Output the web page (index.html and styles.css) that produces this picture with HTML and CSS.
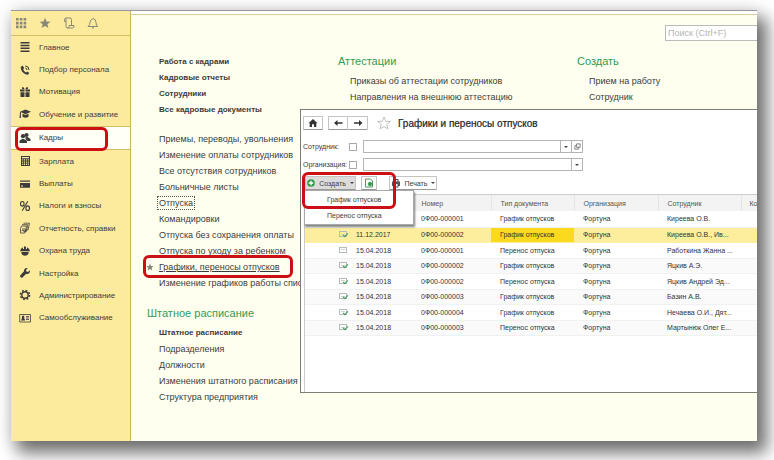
FILE: index.html
```html
<!DOCTYPE html>
<html lang="ru">
<head>
<meta charset="utf-8">
<title>Кадры</title>
<link rel="stylesheet" href="styles.css">
</head>
<body>
<div class="app">
  <nav class="sidebar">
    <div class="tools">
      <button aria-label="Меню"><svg viewBox="0 0 12 12"><path fill="#8b8877" d="M1 1h2.6v2.6H1zM4.8 1h2.6v2.6H4.8zM8.6 1h2.6v2.6H8.6zM1 4.8h2.6v2.6H1zM4.8 4.8h2.6v2.6H4.8zM8.6 4.8h2.6v2.6H8.6zM1 8.6h2.6v2.6H1zM4.8 8.6h2.6v2.6H4.8zM8.6 8.6h2.6v2.6H8.6z"/></svg></button>
      <button aria-label="Избранное"><svg viewBox="0 0 12 12"><path fill="#8b8877" d="M6 .8l1.500 3.700 4 .2-3.100 2.500 1 3.900L6 9l-3.400 2.100 1-3.900L.5 4.700l4-.2z"/></svg></button>
      <button aria-label="История"><svg viewBox="0 0 12 12" fill="none" stroke="#8b8877"><path d="M3 4.500H1.500V2.500Q1.500 1 3 1H7Q8.500 1 8.500 2.500V8M3 1.500V9.500Q3 11 4.500 11H9.500Q11 11 11 9V8.500H6V9.500Q6 11 4.500 11"/></svg></button>
      <button aria-label="Оповещения"><svg viewBox="0 0 12 12" fill="none" stroke="#8b8877"><path d="M1 9.500Q3 8 3 5.500T6 1.500Q9 2 9 5.500T11 9.500ZM5 10.500Q6 12 7 10.500"/></svg></button>
    </div>
    <ul class="menu">
      <li><a href="#"><svg viewBox="0 0 12 12"><path d="M1.500 1h9v1.500h-9zM1.500 3.800h9v1.500h-9zM1.500 6.600h9v1.500h-9zM1.500 9.400h9v1.500h-9z"/></svg>Главное</a></li>
      <li><a href="#"><svg viewBox="0 0 12 12"><path d="M3.500 1.500L1.800 3C1.500 7 5 10.500 9 10.800l1.300-1.700-2-1.700-1.300 1C5.500 7.600 4.500 6.300 4.200 5.200l1-1.200z"/><path fill="none" stroke="currentColor" d="M6.300 4Q8 4 8 6M6.300 2Q10 2 10 6"/></svg>Подбор персонала</a></li>
      <li><a href="#"><svg viewBox="0 0 12 12"><path d="M1 3.500h4.500v2H1zM6.500 3.500H11v2H6.500zM1.500 6.200h4V11h-4zM6.500 6.200h4V11h-4zM5.600 3.200L3 3 3 1.200 4.600 1.200zM6.400 3.200L9 3 9 1.200 7.400 1.200z"/></svg>Мотивация</a></li>
      <li><a href="#"><svg viewBox="0 0 12 12"><path d="M6.500 1.500L12 3.800 6.500 6.200 1 3.800zM3.500 5.700l3 1.300 3-1.300v3Q6.500 11 3.500 8.700zM1 4h.9v6H.5z"/></svg>Обучение и развитие</a></li>
      <li class="active"><a href="#"><svg viewBox="0 0 12 12"><circle cx="7.500" cy="3" r="2.100"/><path d="M6.600 5h2L11.500 7v2h-3L6.500 7z"/><circle cx="4" cy="4.200" r="2.100"/><path d="M.5 11V8.800L3 7h2l3 1.800V11z"/></svg>Кадры</a></li>
      <li><a href="#"><svg viewBox="0 0 12 12"><path fill-rule="evenodd" d="M2 1h9v10H2zM3 2v1.200h7V2zM3.200 4.200v1.300h1V4.200zM5 4.200v1.300h1V4.200zM6.900 4.200v1.300h1V4.200zM8.800 4.200v1.300h1V4.200zM3.200 6.400v1.300h1V6.400zM5 6.400v1.300h1V6.400zM6.900 6.400v1.300h1V6.400zM8.800 6.400v1.300h1V6.400zM3.200 8.600v1.300h1V8.600zM5 8.600v1.300h1V8.600zM6.900 8.600v1.300h1V8.600zM8.800 8.600v1.300h1V8.600z"/></svg>Зарплата</a></li>
      <li><a href="#"><svg viewBox="0 0 12 12"><path fill-rule="evenodd" d="M1 2.500h10v1.300H1zM1 5h10v4.700H1zM2 7.500v1h2v-1z"/></svg>Выплаты</a></li>
      <li><a href="#"><svg viewBox="0 0 12 12" fill="none" stroke="currentColor" stroke-width="1.100"><ellipse cx="3.300" cy="3.800" rx="1.800" ry="2.300"/><ellipse cx="8.700" cy="8.200" rx="1.800" ry="2.300"/><path d="M8.800 1.200L3.200 10.800"/></svg>Налоги и взносы</a></li>
      <li><a href="#"><svg viewBox="0 0 12 12" fill="none" stroke="currentColor" stroke-width=".8"><path d="M4.500 1.200H10.500L9 8H6M3 2.700H8.800L7.300 9.500H4.500M2.500 4H7.500L6 11H1.500V6.500zM3 7h3M2.800 8.500h3"/></svg>Отчетность, справки</a></li>
      <li><a href="#"><svg viewBox="0 0 12 12"><path d="M1 6.200Q1.500 3 4 2.200V4h1V1.500h2V4h1V2.200Q10.500 3 11 6.200zM2.300 7h7.400Q9.500 10.800 6 10.800T2.300 7z"/></svg>Охрана труда</a></li>
      <li><a href="#"><svg viewBox="0 0 12 12"><path d="M10.800 3.200L9 5 7.400 4.600 7 3 8.700 1.300C6.500.6 4.800 2 5 4.300L1.200 8.600Q.7 10.900 3.200 10.800L7 7C9.500 7.500 11.500 5.500 10.800 3.200z"/></svg>Настройка</a></li>
      <li><a href="#"><svg viewBox="0 0 12 12" fill="none" stroke="currentColor"><circle cx="6" cy="6" r="3.200" stroke-width="1.400"/><circle cx="6" cy="6" r="4.600" stroke-width="1.500" stroke-dasharray="1.800 1.810"/></svg>Администрирование</a></li>
      <li><a href="#"><svg viewBox="0 0 12 12" fill="none" stroke="currentColor" stroke-width=".8"><path d="M.7 2.500h10.800v7.500H.7zM7 4.500h3M7 6h3M7 7.500h3"/><path fill="currentColor" stroke="none" d="M3 3.700h2.200v2.200l1 2.600H2l1-2.600z"/></svg>Самообслуживание</a></li>
    </ul>
  </nav>

  <main class="page">
    <input class="search" type="search" placeholder="Поиск (Ctrl+F)" aria-label="Поиск">
    <div class="columns">
      <section class="col-main">
        <ul class="links strong">
          <li><a href="#">Работа с кадрами</a></li>
          <li><a href="#">Кадровые отчеты</a></li>
          <li><a href="#">Сотрудники</a></li>
          <li><a href="#">Все кадровые документы</a></li>
        </ul>
        <ul class="links">
          <li><a href="#">Приемы, переводы, увольнения</a></li>
          <li><a href="#">Изменение оплаты сотрудников</a></li>
          <li><a href="#">Все отсутствия сотрудников</a></li>
          <li><a href="#">Больничные листы</a></li>
          <li><a class="focused" href="#">Отпуска</a></li>
          <li><a href="#">Командировки</a></li>
          <li><a href="#">Отпуска без сохранения оплаты</a></li>
          <li><a href="#">Отпуска по уходу за ребенком</a></li>
          <li class="starred"><svg viewBox="0 0 12 12"><path fill="#858378" d="M6 .8l1.500 3.700 4 .2-3.100 2.500 1 3.900L6 9l-3.400 2.100 1-3.900L.5 4.700l4-.2z"/></svg><a href="#">Графики, переносы отпусков</a></li>
          <li><a href="#">Изменение графиков работы списком</a></li>
        </ul>
        <h2>Штатное расписание</h2>
        <ul class="links">
          <li class="strong"><a href="#">Штатное расписание</a></li>
          <li><a href="#">Подразделения</a></li>
          <li><a href="#">Должности</a></li>
          <li><a href="#">Изменения штатного расписания</a></li>
          <li><a href="#">Структура предприятия</a></li>
        </ul>
      </section>
      <section class="col-att">
        <h2>Аттестации</h2>
        <ul class="links">
          <li><a href="#">Приказы об аттестации сотрудников</a></li>
          <li><a href="#">Направления на внешнюю аттестацию</a></li>
        </ul>
      </section>
      <section class="col-new">
        <h2>Создать</h2>
        <ul class="links">
          <li><a href="#">Прием на работу</a></li>
          <li><a href="#">Сотрудник</a></li>
        </ul>
      </section>
    </div>
  </main>

  <section class="window">
    <header class="titlebar">
      <button class="btn home" aria-label="Домой"><svg viewBox="0 0 10 10"><path d="M5 1l4.500 4.200H8.300V9H6V6.300H4V9H1.700V5.200H.5z"/></svg></button>
      <div class="pair">
        <button class="btn" aria-label="Назад"><svg viewBox="0 0 10 10"><path d="M1 5l3.500-3v2.300H9.500v1.400h-5V8z"/></svg></button>
        <button class="btn" aria-label="Вперед"><svg viewBox="0 0 10 10"><path d="M9.500 5L6 2v2.300H1v1.400h5V8z"/></svg></button>
      </div>
      <svg class="fav" viewBox="0 0 12 12"><path fill="none" stroke="#bbb" stroke-width=".8" d="M6 .8l1.500 3.700 4 .2-3.100 2.500 1 3.900L6 9l-3.400 2.100 1-3.900L.5 4.700l4-.2z"/></svg>
      <h1>Графики и переносы отпусков</h1>
    </header>
    <div class="filters">
      <label for="emp">Сотрудник:</label>
      <input type="checkbox" aria-label="Отбор по сотруднику">
      <div class="combo"><input id="emp" type="text"><button aria-label="Выбрать"><i class="caret"></i></button><button aria-label="Открыть"><svg viewBox="0 0 8 8" fill="none" stroke="#666" stroke-width=".9"><path d="M3 1h4v4H3zM3 3H1v4h4V5"/></svg></button></div>
      <label for="org">Организация:</label>
      <input type="checkbox" aria-label="Отбор по организации">
      <div class="combo"><input id="org" type="text"><button aria-label="Выбрать"><i class="caret"></i></button></div>
    </div>
    <div class="toolbar">
      <button class="btn create"><svg viewBox="0 0 10 10"><circle cx="5" cy="5" r="4.800" fill="#2f9e49"/><path stroke="#fff" stroke-width="1.600" d="M5 2.200v5.600M2.200 5h5.600"/></svg>Создать<i class="caret"></i></button>
      <button class="btn copy" aria-label="Скопировать"><svg viewBox="0 0 10 10" fill="none" stroke="#4a9a5c"><path d="M1.500 1h5l2 2v6h-7z"/><circle cx="6" cy="6" r="1.800" fill="#2f9e49"/></svg></button>
      <button class="btn print"><svg viewBox="0 0 10 10"><path fill="#555" d="M2.500 1h5v2.500H9V8H7.500v1.500h-5V8H1V3.500h1.500z"/><path fill="#fff" d="M3.500 6h3v2.500h-3zM3.500 2h3v1.500h-3z"/></svg>Печать<i class="caret"></i></button>
      <div class="dropdown">
        <button>График отпусков</button>
        <button>Перенос отпуска</button>
      </div>
    </div>
    <div class="grid">
      <table>
        <colgroup><col class="c-date"><col class="c-num"><col class="c-type"><col class="c-org"><col class="c-emp"><col></colgroup>
        <thead><tr><th></th><th>Номер</th><th>Тип документа</th><th>Организация</th><th>Сотрудник</th><th>Ко</th></tr></thead>
        <tbody>
          <tr><td></td><td>0Ф00-000001</td><td>График отпусков</td><td>Фортуна</td><td>Киреева О.В.</td><td></td></tr>
          <tr class="selected"><td><span class="doc ok"></span>11.12.2017</td><td>0Ф00-000002</td><td class="current">График отпусков</td><td>Фортуна</td><td>Киреева О.В., Ив...</td><td></td></tr>
          <tr><td><span class="doc"></span>15.04.2018</td><td>0Ф00-000001</td><td>Перенос отпуска</td><td>Фортуна</td><td>Работкина Жанна ...</td><td></td></tr>
          <tr><td><span class="doc ok"></span>15.04.2018</td><td>0Ф00-000002</td><td>График отпусков</td><td>Фортуна</td><td>Яцкив А.Э.</td><td></td></tr>
          <tr><td><span class="doc ok"></span>15.04.2018</td><td>0Ф00-000002</td><td>Перенос отпуска</td><td>Фортуна</td><td>Яцкив Андрей Эд...</td><td></td></tr>
          <tr><td><span class="doc ok"></span>15.04.2018</td><td>0Ф00-000003</td><td>График отпусков</td><td>Фортуна</td><td>Базин А.В.</td><td></td></tr>
          <tr><td><span class="doc ok"></span>15.04.2018</td><td>0Ф00-000004</td><td>График отпусков</td><td>Фортуна</td><td>Нечаева О.И., Дят...</td><td></td></tr>
          <tr><td><span class="doc ok"></span>15.04.2018</td><td>0Ф00-000003</td><td>Перенос отпуска</td><td>Фортуна</td><td>Мартынюк Олег Е...</td><td></td></tr>
        </tbody>
      </table>
    </div>
  </section>
</div>
</body>
</html>
```
FILE: styles.css
```css
*, *::before, *::after { box-sizing: border-box; }
body {
  margin: 0;
  min-height: 100vh;
  padding: 10px 17px 19px 11px;
  display: flex;
  overflow: hidden;
  background: #fff;
  font-family: "Liberation Sans", Arial, sans-serif;
  font-size: 9px;
  color: #3c3c3c;
}
button, input { font: inherit; color: inherit; margin: 0; padding: 0; }
button { border: 0; background: none; }
a { color: inherit; text-decoration: none; }
ul { list-style: none; margin: 0; padding: 0; }
h1, h2 { margin: 0; font-weight: normal; }
svg { flex: none; }

.app {
  position: relative;
  flex: 1;
  display: flex;
  background: #fffff0;
  border-top: 1px solid #999;
  box-shadow: 8px 10px 16px 2px rgba(0, 0, 0, .55), 0 0 16px rgba(0, 0, 0, .12);
}

/* sidebar */
.sidebar {
  flex: none;
  width: 120px;
  background: #fceb9c;
  border-right: 1px solid #c9b65c;
  font-size: 8px;
}
.tools {
  display: flex;
  align-items: center;
  gap: 12px;
  height: 25px;
  padding-left: 4px;
  border-bottom: 1px solid #d3bf66;
}
.tools button { display: flex; }
.tools svg { width: 12px; height: 12px; }
.menu { display: flex; flex-direction: column; height: 293px; }
.menu li { flex: 1; display: flex; align-items: center; position: relative; }
.menu a { display: flex; align-items: center; gap: 8px; padding-left: 8px; white-space: nowrap; }
.menu svg { width: 12px; height: 12px; fill: #3c3c3c; color: #3c3c3c; }
.menu svg[fill="none"] { fill: none; }
.menu .active { background: #fffff6; border: 1px solid #d3bf66; border-width: 1px 0; }
.menu .active::after, .starred::before, .create::after {
  content: "";
  position: absolute;
  border: 3px solid #cc0f14;
  border-radius: 6px;
  pointer-events: none;
}
.menu .active::after { left: 4px; top: 0; width: 93px; height: 24px; }

/* section page */
.page { flex: 1; min-width: 0; border-top: 3px solid #fff; box-shadow: inset 0 1px #d8cc9a; overflow: hidden; }
.search {
  display: block;
  width: 92px;
  height: 16px;
  margin: 11px 0 0 auto;
  padding: 0 2px;
  border: 1px solid #bbb;
  border-right: 0;
  background: #fff;
  outline: 0;
}
.search::placeholder { color: #b5b5b5; }
.columns { display: grid; grid-template-columns: 191px 239px 1fr; padding: 12px 0 0 16px; }
.links { padding-left: 12px; }
.links li { position: relative; height: 16px; line-height: 16px; white-space: nowrap; }
.strong { font-weight: bold; font-size: 8px; }
.col-main .links:first-child { margin: 1px 0 13px; }
h2 { font-size: 11px; line-height: 16px; color: #2f9b52; }
.col-main h2 { margin: 14px 0 4px; }
.col-att h2, .col-new h2 { margin-bottom: 4px; }
.focused { outline: 1px dotted #555; outline-offset: 1px; }
.starred a { text-decoration: underline; }
.starred svg { position: absolute; left: -13px; top: 4px; width: 8px; height: 8px; }
.starred::before { left: -16px; top: -4px; width: 150px; height: 23px; }

/* document window */
.window {
  position: absolute;
  left: 289px;
  right: 0;
  top: 98px;
  height: 284px;
  display: flex;
  flex-direction: column;
  padding-left: 2px;
  background: #fff;
  border: 1px solid #7d7d78;
  border-right: 0;
  font-size: 7px;
}
.titlebar { display: flex; align-items: center; height: 26px; }
.btn {
  display: flex;
  align-items: center;
  justify-content: center;
  height: 14px;
  background: #fff;
  border: 1px solid #c4c4c4;
  border-bottom-color: #999;
  border-radius: 1px;
}
.btn svg { width: 10px; height: 10px; fill: #333; }
.btn svg[fill="none"] { fill: none; }
.titlebar .btn { width: 20px; }
.pair { display: flex; margin: 0 9px 0 5px; }
.pair .btn + .btn { border-left: 0; }
.fav { width: 14px; height: 14px; }
h1 { margin-left: 7px; font-size: 10px; color: #222; -webkit-text-stroke: 0.2px #222; white-space: nowrap; }
.filters {
  display: grid;
  grid-template-columns: 46px 9px 1fr;
  align-items: center;
  row-gap: 5px;
  padding-top: 4px;
}
.filters input[type="checkbox"] {
  appearance: none;
  width: 8px;
  height: 8px;
  border: 1px solid #aaa;
  background: #fff;
}
.combo { display: flex; width: 220px; height: 13px; margin-left: 5px; border: 1px solid #b4b4b4; }
.combo input { flex: 1; min-width: 0; border: 0; outline: 0; background: none; }
.combo button { display: flex; align-items: center; justify-content: center; width: 11px; border-left: 1px solid #b4b4b4; }
.combo svg { width: 7px; height: 7px; }
.caret { border: 2px solid transparent; border-top-color: #444; border-bottom: 0; }
.toolbar { position: relative; display: flex; margin-top: 5px; padding-left: 2px; }
.toolbar .btn { gap: 4px; }
.create { position: relative; width: 51px; }
.toolbar .create { background: #dcdcdc; }
.create svg { width: 8px; height: 8px; }
.create::after { left: -4px; top: -5px; width: 94px; height: 37px; z-index: 3; }
.copy { width: 16px; margin-left: 5px; }
.toolbar .print { width: 48px; margin-left: 12px; }
.dropdown {
  position: absolute;
  left: 1px;
  top: 14px;
  z-index: 2;
  width: 110px;
  padding-bottom: 1px;
  background: #fff;
  border: 1px solid #aaa;
  box-shadow: 1px 2px 2px rgba(0, 0, 0, .5);
}
.dropdown button { display: block; width: 100%; height: 16px; padding-left: 22px; text-align: left; }
.grid { flex: 1; margin: 4px 0 0 1px; border: 1px solid #ccc; border-width: 1px 0 0 1px; overflow: hidden; }
table { width: 100%; table-layout: fixed; border-collapse: collapse; }
.c-date { width: 107px; }
.c-num { width: 79px; }
.c-type, .c-emp { width: 83px; }
.c-org { width: 84px; }
th, td { padding: 0 0 0 9px; height: 16px; text-align: left; font-weight: normal; white-space: nowrap; overflow: hidden; }
td { color: #333; border-bottom: 1px solid #f1f1f1; }
th { background: #f3f3f3; color: #555; border-right: 1px solid #e4e4e4; }
th:last-child { border-right: 0; padding-left: 8px; }
tbody tr:nth-child(even) td { height: 15px; background: #fafafa; }
td:first-child { padding-left: 34px; }
tbody tr.selected td { background: #fdee9e; border-color: #fdee9e; }
tbody tr.selected td.current { background: #fbd91c; }
.doc {
  position: relative;
  display: inline-block;
  width: 8px;
  height: 6px;
  margin-right: 9px;
  border: 1px solid #b4bcb8;
  background: linear-gradient(#ccd3cf, #ccd3cf) center / 4px 1px no-repeat;
}
.doc.ok::after {
  content: "";
  position: absolute;
  left: 3px;
  top: 1px;
  width: 5px;
  height: 3px;
  border: solid #3d9b55;
  border-width: 0 0 1px 1px;
  transform: rotate(-45deg);
}
```
